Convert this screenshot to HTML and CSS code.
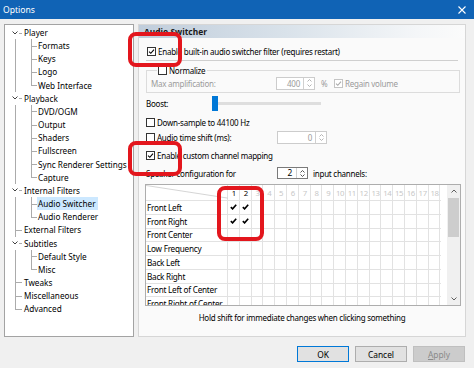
FILE: index.html
```html
<!DOCTYPE html>
<html>
<head>
<meta charset="utf-8">
<title>Options</title>
<link rel="stylesheet" href="styles.css">
</head>
<body>
<div class="window">
  <div class="titlebar">
    <span class="title">Options</span>
    <svg class="close" viewBox="0 0 8 8"><path d="M0.5 0.5 L7.5 7.5 M7.5 0.5 L0.5 7.5"/></svg>
  </div>
  <div class="main">
    <div class="tree">
      <ul class="root">
        <li><div class="row"><span class="chev"><svg viewBox="0 0 6 4"><path d="M0.5 0.5 L3 3 L5.5 0.5"/></svg></span>Player</div>
          <ul class="sub">
            <li><div class="row">Formats</div></li>
            <li><div class="row">Keys</div></li>
            <li><div class="row">Logo</div></li>
            <li><div class="row">Web Interface</div></li>
          </ul>
        </li>
        <li><div class="row"><span class="chev"><svg viewBox="0 0 6 4"><path d="M0.5 0.5 L3 3 L5.5 0.5"/></svg></span>Playback</div>
          <ul class="sub">
            <li><div class="row">DVD/OGM</div></li>
            <li><div class="row">Output</div></li>
            <li><div class="row">Shaders</div></li>
            <li><div class="row">Fullscreen</div></li>
            <li><div class="row">Sync Renderer Settings</div></li>
            <li><div class="row">Capture</div></li>
          </ul>
        </li>
        <li><div class="row"><span class="chev"><svg viewBox="0 0 6 4"><path d="M0.5 0.5 L3 3 L5.5 0.5"/></svg></span>Internal Filters</div>
          <ul class="sub">
            <li><div class="row"><span class="sel">Audio Switcher</span></div></li>
            <li><div class="row">Audio Renderer</div></li>
          </ul>
        </li>
        <li><div class="row">External Filters</div></li>
        <li><div class="row"><span class="chev"><svg viewBox="0 0 6 4"><path d="M0.5 0.5 L3 3 L5.5 0.5"/></svg></span>Subtitles</div>
          <ul class="sub">
            <li><div class="row">Default Style</div></li>
            <li><div class="row">Misc</div></li>
          </ul>
        </li>
        <li><div class="row">Tweaks</div></li>
        <li><div class="row">Miscellaneous</div></li>
        <li><div class="row">Advanced</div></li>
      </ul>
    </div>

    <div class="page">
      <div class="caption">Audio Switcher</div>

      <div class="line r-enable">
        <span class="cb"><svg viewBox="0 0 7 7"><path d="M1 3.6 L2.8 5.3 L6 1.6"/></svg></span>
        <span>Enable built-in audio switcher filter (requires restart)</span>
      </div>

      <div class="sep"></div>

      <div class="group">
        <div class="legend">
          <span class="cb"></span><span>Normalize</span>
        </div>
        <div class="line r-amp">
          <span class="lbl-amp dis">Max amplification:</span>
          <span class="edit dis e400"><span class="val">400</span><span class="spin"><svg viewBox="0 0 5 3"><path d="M0.5 2.5 L2.5 0.5 L4.5 2.5"/></svg><svg viewBox="0 0 5 3"><path d="M0.5 0.5 L2.5 2.5 L4.5 0.5"/></svg></span></span>
          <span class="pct dis">%</span>
          <span class="cb dcb"><svg viewBox="0 0 7 7"><path d="M1 3.6 L2.8 5.3 L6 1.6"/></svg></span>
          <span class="dis">Regain volume</span>
        </div>
      </div>

      <div class="line r-boost">
        <span class="lbl-boost">Boost:</span>
        <div class="slider"><div class="thumb"></div><div class="track"></div></div>
      </div>

      <div class="line r-down">
        <span class="cb"></span><span>Down-sample to 44100 Hz</span>
      </div>

      <div class="line r-shift">
        <span class="cb"></span><span class="lbl-shift">Audio time shift (ms):</span>
        <span class="edit dis e0"><span class="val">0</span><span class="spin"><svg viewBox="0 0 5 3"><path d="M0.5 2.5 L2.5 0.5 L4.5 2.5"/></svg><svg viewBox="0 0 5 3"><path d="M0.5 0.5 L2.5 2.5 L4.5 0.5"/></svg></span></span>
      </div>

      <div class="line r-custom">
        <span class="cb"><svg viewBox="0 0 7 7"><path d="M1 3.6 L2.8 5.3 L6 1.6"/></svg></span>
        <span>Enable custom channel mapping</span>
      </div>

      <div class="line r-speaker">
        <span class="lbl-speaker">Speaker configuration for</span>
        <span class="edit e2"><span class="val">2</span><span class="spin"><svg viewBox="0 0 5 3"><path d="M0.5 2.5 L2.5 0.5 L4.5 2.5"/></svg><svg viewBox="0 0 5 3"><path d="M0.5 0.5 L2.5 2.5 L4.5 0.5"/></svg></span></span>
        <span class="inch">input channels:</span>
      </div>

      <div class="grid">
        <div class="gbody">
          <div class="grow ghead">
            <span class="corner"><svg viewBox="0 0 82 16" preserveAspectRatio="none"><path d="M0 0.5 L82 14"/></svg></span>
            <span class="num">1</span><span class="num">2</span><span class="num off">3</span><span class="num off">4</span><span class="num off">5</span><span class="num off">6</span><span class="num off">7</span><span class="num off">8</span><span class="num off">9</span><span class="num off">10</span><span class="num off">11</span><span class="num off">12</span><span class="num off">13</span><span class="num off">14</span><span class="num off">15</span><span class="num off">16</span><span class="num off">17</span><span class="num off">18</span>
          </div>
          <div class="grow"><span class="glbl">Front Left</span><span class="ck c1"><svg viewBox="0 0 7 6"><path d="M0.8 3.2 L2.6 4.9 L6.2 0.8"/></svg></span><span class="ck c2"><svg viewBox="0 0 7 6"><path d="M0.8 3.2 L2.6 4.9 L6.2 0.8"/></svg></span></div>
          <div class="grow"><span class="glbl">Front Right</span><span class="ck c1"><svg viewBox="0 0 7 6"><path d="M0.8 3.2 L2.6 4.9 L6.2 0.8"/></svg></span><span class="ck c2"><svg viewBox="0 0 7 6"><path d="M0.8 3.2 L2.6 4.9 L6.2 0.8"/></svg></span></div>
          <div class="grow"><span class="glbl">Front Center</span></div>
          <div class="grow"><span class="glbl">Low Frequency</span></div>
          <div class="grow"><span class="glbl">Back Left</span></div>
          <div class="grow"><span class="glbl">Back Right</span></div>
          <div class="grow"><span class="glbl">Front Left of Center</span></div>
          <div class="grow"><span class="glbl">Front Right of Center</span></div>
        </div>
        <div class="vscroll">
          <span class="sbtn"><svg viewBox="0 0 6 4"><path d="M0.5 3.5 L3 1 L5.5 3.5"/></svg></span>
          <span class="sthumb"></span>
          <span class="sfill"></span>
          <span class="sbtn"><svg viewBox="0 0 6 4"><path d="M0.5 0.5 L3 3 L5.5 0.5"/></svg></span>
        </div>
      </div>

      <div class="hint">Hold shift for immediate changes when clicking something</div>
    </div>
  </div>

  <div class="footer">
    <button class="btn default">OK</button>
    <button class="btn">Cancel</button>
    <button class="btn disabled"><u>A</u>pply</button>
  </div>

  <div class="marks">
    <span class="mark m1"></span>
    <span class="mark m2"></span>
    <span class="mark m3"></span>
  </div>
</div>
</body>
</html>
```
FILE: styles.css
```css
* { box-sizing: border-box; }

body {
  margin: 0;
  background: #f0f0f0;
  font-family: "Noto Sans", "Open Sans", sans-serif;
  font-size: 8.4px;
  color: #000;
}

.window {
  width: 474px;
  height: 368px;
  position: relative;
  overflow: hidden;
  display: flex;
  flex-direction: column;
}

/* title bar */
.titlebar {
  height: 19px;
  flex: none;
  background: #1063b5;
  color: #fff;
  display: flex;
  align-items: center;
  justify-content: space-between;
  padding: 0 8px 0 3px;
}
.title { font-size: 8.6px; }
.close { width: 8px; height: 8px; }
.close path { stroke: #fff; stroke-width: 1.1; fill: none; }

.main {
  display: flex;
  gap: 4px;
  padding: 5px 8px 0 4px;
  height: 318px;
  flex: none;
}

/* tree */
.tree {
  width: 130px;
  height: 313px;
  border: 1px solid #a3a3a3;
  background: #fff;
  padding-top: 1px;
  overflow: hidden;
  font-size: 8.2px;
}
.tree ul {
  list-style: none;
  margin: 0;
  padding: 0;
  position: relative;
}
.root::before {
  content: "";
  position: absolute;
  left: 10px;
  top: 6.6px;
  bottom: 6.6px;
  border-left: 1px solid #ababab;
}
.sub::before {
  content: "";
  position: absolute;
  left: 26px;
  top: 0;
  bottom: 6.6px;
  border-left: 1px solid #ababab;
}
.row {
  position: relative;
  height: 13.17px;
  line-height: 13.17px;
  padding-left: 19px;
  white-space: nowrap;
}
.row::before {
  content: "";
  position: absolute;
  left: 10px;
  width: 7px;
  top: 6.5px;
  border-top: 1px solid #ababab;
}
.sub .row { padding-left: 33px; }
.sub .row::before { left: 26px; width: 6px; }
.chev {
  position: absolute;
  left: 6px;
  top: 0;
  width: 8px;
  height: 100%;
  background: #fff;
  display: flex;
  align-items: center;
  justify-content: center;
  z-index: 1;
}
.chev svg { width: 6px; height: 4px; }
.chev path { stroke: #404040; stroke-width: 1; fill: none; }
.sel {
  background: #cce8ff;
  margin-left: -1px;
  padding: 1px 2px 1px 1px;
}

/* page */
.page {
  flex: 1;
  height: 313px;
  border: 1px solid #d6d6d6;
  background: #fafafa;
  display: flex;
  flex-direction: column;
  font-size: 8px;
  letter-spacing: -0.25px;
}
.caption {
  height: 13px;
  line-height: 13px;
  padding-left: 5px;
  font-weight: bold;
  font-size: 8.4px;
  letter-spacing: 0;
  color: #1a1a1a;
  background: linear-gradient(to right, #c0cddb 0%, #d9e2ea 45%, #f4f6f8 85%, #fbfbfb 100%);
}
.line {
  display: flex;
  align-items: center;
  white-space: nowrap;
  margin-left: 7px;
}
.cb {
  width: 9px;
  height: 9px;
  flex: none;
  border: 1px solid #333;
  background: #fff;
  margin-right: 2px;
  display: inline-flex;
}
.cb svg { width: 7px; height: 7px; }
.cb path { stroke: #000; stroke-width: 1.1; fill: none; }
.cb.dcb { border-color: #c4c4c4; }
.cb.dcb path { stroke: #a8a8a8; }
.dis { color: #9b9b9b; }

.r-enable { margin-top: 7px; height: 12px; margin-left: 8px; }
.sep {
  margin: 3px 0 0 7px;
  width: 312px;
  height: 1px;
  background: #cfcfcf;
}
.group {
  margin: 9px 0 0 7px;
  width: 314px;
  height: 23px;
  border: 1px solid #dcdcdc;
  display: flex;
  flex-direction: column;
}
.legend {
  margin: -7px 0 0 10px;
  height: 12px;
  display: flex;
  align-items: center;
  align-self: flex-start;
  background: #fafafa;
  padding: 0 2px 0 1px;
}
.r-amp { height: 14px; margin-left: 0; padding-left: 4px; }
.lbl-amp { width: 125px; }
.pct { margin-left: 6px; width: 13px; }

.edit {
  display: flex;
  height: 13px;
  border: 1px solid #7a7a7a;
  background: #fff;
  flex: none;
}
.edit.dis { border-color: #cccccc; }
.edit .val {
  text-align: right;
  padding-right: 3px;
  line-height: 11px;
}
.spin {
  width: 11px;
  border-left: 1px solid #d0d0d0;
  display: flex;
  flex-direction: column;
  align-items: center;
  justify-content: space-around;
  padding: 1px 0;
}
.spin svg { width: 5px; height: 3px; }
.spin path { stroke: #555; stroke-width: 1; fill: none; }
.edit.dis .spin path { stroke: #b4b4b4; }
.e400 .val { width: 26px; }
.e0 { height: 13px; }
.e0 .val { width: 37px; }
.e2 { height: 12px; }
.e2 .val { width: 18px; line-height: 10px; padding-right: 4px; font-size: 8.4px; }

.r-boost { margin-top: 2px; height: 16px; }
.lbl-boost { width: 66px; }
.slider {
  width: 109px;
  height: 16px;
  display: flex;
  align-items: center;
}
.thumb { width: 6px; height: 15px; background: #0078d7; flex: none; }
.track { flex: 1; height: 3px; background: #dedede; }

.r-down { margin-top: 5px; height: 12px; }
.r-shift { margin-top: 3px; height: 13px; }
.lbl-shift { width: 120px; }
.r-custom { margin-top: 5px; height: 12px; }
.r-speaker { margin-top: 6px; height: 12px; }
.lbl-speaker { width: 131px; }
.inch { margin-left: 5px; }

/* grid */
.grid {
  margin: 5px 0 0 6px;
  width: 316px;
  height: 122px;
  border: 1px solid #adadad;
  background: #fff;
  display: flex;
  font-size: 8.2px;
  letter-spacing: -0.25px;
}
.gbody {
  flex: 1;
  overflow: hidden;
  background-color: #fff;
  background-image: repeating-linear-gradient(to right, #e2e2e2 0 1px, transparent 1px 11.8px);
  background-size: 213.4px 100%;
  background-position: 81px 0;
  background-repeat: no-repeat;
}
.grow {
  display: grid;
  grid-template-columns: 82px repeat(18, 11.8px) 1fr;
  height: 13.75px;
  border-bottom: 1px solid #e2e2e2;
  align-items: center;
}
.ghead { height: 16px; }
.corner { height: 15px; display: flex; }
.corner svg { width: 82px; height: 15px; }
.corner path { stroke: #d4d4d4; stroke-width: 1; fill: none; }
.num { text-align: center; font-size: 7.8px; letter-spacing: -0.4px; }
.num.off { color: #c8c8c8; }
.glbl { padding-left: 1px; white-space: nowrap; }
.ck { display: flex; justify-content: center; }
.ck svg { width: 7px; height: 6px; }
.ck path { stroke: #000; stroke-width: 1.6; fill: none; }
.c1 { grid-column: 2; }
.c2 { grid-column: 3; }

.vscroll {
  width: 13px;
  margin-left: 6px;
  background: #f0f0f0;
  display: flex;
  flex-direction: column;
  align-items: center;
}
.sbtn { height: 12px; display: flex; align-items: center; }
.sbtn svg { width: 6px; height: 4px; }
.sbtn path { stroke: #606060; stroke-width: 1; fill: none; }
.sthumb { width: 11px; height: 39px; margin-top: 1px; background: #cdcdcd; }
.sfill { flex: 1; }

.hint {
  margin-top: 6px;
  height: 12px;
  line-height: 12px;
  text-align: center;
}

/* footer */
.footer {
  flex: 1;
  display: flex;
  justify-content: flex-end;
  align-items: flex-start;
  gap: 6px;
  padding: 9px 9px 0 0;
}
.btn {
  width: 52px;
  height: 16px;
  padding: 0;
  font-family: "Noto Sans", "Open Sans", sans-serif;
  font-size: 8.4px;
  color: #000;
  background: #e1e1e1;
  border: 1px solid #adadad;
}
.btn.default { border-color: #0078d7; }
.btn.disabled { background: #cccccc; border-color: #bfbfbf; color: #8a8a8a; }

/* red annotation overlay */
.marks {
  position: absolute;
  left: 0;
  top: 0;
  width: 474px;
  height: 368px;
  pointer-events: none;
}
.mark {
  position: absolute;
  border: 4px solid #e3161d;
  border-radius: 8px;
}
.m1 { left: 128px; top: 32px; width: 54px; height: 35px; }
.m2 { left: 128px; top: 141px; width: 54px; height: 35px; }
.m3 { left: 217px; top: 186px; width: 47px; height: 55px; }
```
